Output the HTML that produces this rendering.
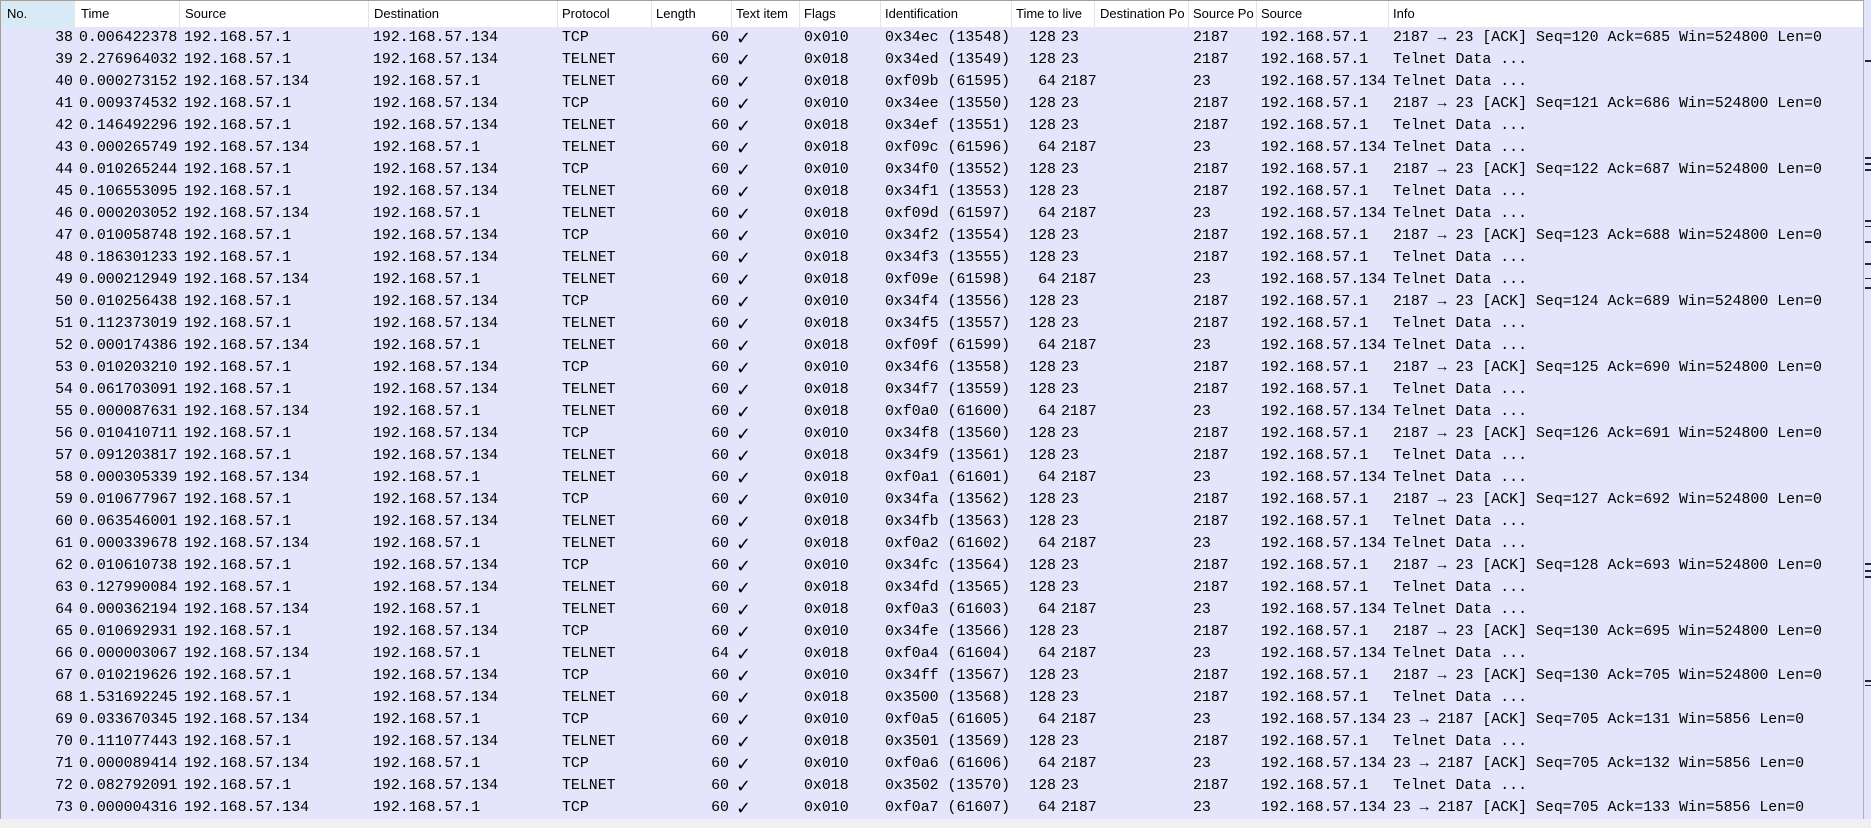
<!DOCTYPE html>
<html><head><meta charset="utf-8"><style>
html,body{margin:0;padding:0;}
body{width:1871px;height:828px;position:relative;overflow:hidden;background:#f0f0f0;font-family:"Liberation Sans",sans-serif;}
#tbl{position:absolute;left:0;top:0;width:1864px;height:819px;background:#e4e4fa;border-top:1px solid #a0a0a0;border-left:1px solid #a0a0a0;border-right:1px solid #b0b0b0;box-sizing:border-box;}
#hdr{position:absolute;left:0;top:0;width:1862px;height:26px;background:#fff;font-size:13px;color:#000;}
#hdr span{position:absolute;top:5px;}
#hdr i{position:absolute;top:0;width:1px;height:26px;background:#e4e4e4;}
#nohl{position:absolute;left:0;top:0;width:73px;height:26px;background:#d9eaf7;}
.r{position:absolute;left:0;width:1862px;height:22px;font-family:"Liberation Mono",monospace;font-size:14.9px;line-height:23px;color:#000;white-space:pre;}
.r span{position:absolute;top:0;}
.a{right:1790px;text-align:right}
.b{left:78px}.c{left:183px}.d{left:372px}.e{left:561px}
.f{right:1134px}.g{left:735px;font-size:18px;font-family:"DejaVu Sans",sans-serif}.h{left:803px}.k{left:884px}
.l{right:807px}.m{left:1060px}.n{left:1192px}.o{left:1260px}.p{left:1392px}
#strip{position:absolute;left:1864px;top:0;width:7px;height:819px;background:#e4e4fa;}
#strip b{position:absolute;left:1px;width:6px;height:2px;background:#1a2a3a;}
</style></head><body>
<div id="tbl">
<div id="hdr"><div id="nohl"></div>
<span style="left:6px">No.</span><i style="left:73px"></i>
<span style="left:80px">Time</span><i style="left:178px"></i>
<span style="left:184px">Source</span><i style="left:367px"></i>
<span style="left:373px">Destination</span><i style="left:556px"></i>
<span style="left:561px">Protocol</span><i style="left:650px"></i>
<span style="left:655px">Length</span><i style="left:730px"></i>
<span style="left:735px">Text item</span><i style="left:798px"></i>
<span style="left:803px">Flags</span><i style="left:879px"></i>
<span style="left:884px">Identification</span><i style="left:1010px"></i>
<span style="left:1015px">Time to live</span><i style="left:1093px"></i>
<span style="left:1099px">Destination Po</span><i style="left:1187px"></i>
<span style="left:1192px">Source Po</span><i style="left:1255px"></i>
<span style="left:1260px">Source</span><i style="left:1387px"></i>
<span style="left:1392px">Info</span>
</div>
<div class="r" style="top:26px"><span class="a">38</span><span class="b">0.006422378</span><span class="c">192.168.57.1</span><span class="d">192.168.57.134</span><span class="e">TCP</span><span class="f">60</span><span class="g">✓</span><span class="h">0x010</span><span class="k">0x34ec (13548)</span><span class="l">128</span><span class="m">23</span><span class="n">2187</span><span class="o">192.168.57.1</span><span class="p">2187 → 23 [ACK] Seq=120 Ack=685 Win=524800 Len=0</span></div>
<div class="r" style="top:48px"><span class="a">39</span><span class="b">2.276964032</span><span class="c">192.168.57.1</span><span class="d">192.168.57.134</span><span class="e">TELNET</span><span class="f">60</span><span class="g">✓</span><span class="h">0x018</span><span class="k">0x34ed (13549)</span><span class="l">128</span><span class="m">23</span><span class="n">2187</span><span class="o">192.168.57.1</span><span class="p">Telnet Data ...</span></div>
<div class="r" style="top:70px"><span class="a">40</span><span class="b">0.000273152</span><span class="c">192.168.57.134</span><span class="d">192.168.57.1</span><span class="e">TELNET</span><span class="f">60</span><span class="g">✓</span><span class="h">0x018</span><span class="k">0xf09b (61595)</span><span class="l">64</span><span class="m">2187</span><span class="n">23</span><span class="o">192.168.57.134</span><span class="p">Telnet Data ...</span></div>
<div class="r" style="top:92px"><span class="a">41</span><span class="b">0.009374532</span><span class="c">192.168.57.1</span><span class="d">192.168.57.134</span><span class="e">TCP</span><span class="f">60</span><span class="g">✓</span><span class="h">0x010</span><span class="k">0x34ee (13550)</span><span class="l">128</span><span class="m">23</span><span class="n">2187</span><span class="o">192.168.57.1</span><span class="p">2187 → 23 [ACK] Seq=121 Ack=686 Win=524800 Len=0</span></div>
<div class="r" style="top:114px"><span class="a">42</span><span class="b">0.146492296</span><span class="c">192.168.57.1</span><span class="d">192.168.57.134</span><span class="e">TELNET</span><span class="f">60</span><span class="g">✓</span><span class="h">0x018</span><span class="k">0x34ef (13551)</span><span class="l">128</span><span class="m">23</span><span class="n">2187</span><span class="o">192.168.57.1</span><span class="p">Telnet Data ...</span></div>
<div class="r" style="top:136px"><span class="a">43</span><span class="b">0.000265749</span><span class="c">192.168.57.134</span><span class="d">192.168.57.1</span><span class="e">TELNET</span><span class="f">60</span><span class="g">✓</span><span class="h">0x018</span><span class="k">0xf09c (61596)</span><span class="l">64</span><span class="m">2187</span><span class="n">23</span><span class="o">192.168.57.134</span><span class="p">Telnet Data ...</span></div>
<div class="r" style="top:158px"><span class="a">44</span><span class="b">0.010265244</span><span class="c">192.168.57.1</span><span class="d">192.168.57.134</span><span class="e">TCP</span><span class="f">60</span><span class="g">✓</span><span class="h">0x010</span><span class="k">0x34f0 (13552)</span><span class="l">128</span><span class="m">23</span><span class="n">2187</span><span class="o">192.168.57.1</span><span class="p">2187 → 23 [ACK] Seq=122 Ack=687 Win=524800 Len=0</span></div>
<div class="r" style="top:180px"><span class="a">45</span><span class="b">0.106553095</span><span class="c">192.168.57.1</span><span class="d">192.168.57.134</span><span class="e">TELNET</span><span class="f">60</span><span class="g">✓</span><span class="h">0x018</span><span class="k">0x34f1 (13553)</span><span class="l">128</span><span class="m">23</span><span class="n">2187</span><span class="o">192.168.57.1</span><span class="p">Telnet Data ...</span></div>
<div class="r" style="top:202px"><span class="a">46</span><span class="b">0.000203052</span><span class="c">192.168.57.134</span><span class="d">192.168.57.1</span><span class="e">TELNET</span><span class="f">60</span><span class="g">✓</span><span class="h">0x018</span><span class="k">0xf09d (61597)</span><span class="l">64</span><span class="m">2187</span><span class="n">23</span><span class="o">192.168.57.134</span><span class="p">Telnet Data ...</span></div>
<div class="r" style="top:224px"><span class="a">47</span><span class="b">0.010058748</span><span class="c">192.168.57.1</span><span class="d">192.168.57.134</span><span class="e">TCP</span><span class="f">60</span><span class="g">✓</span><span class="h">0x010</span><span class="k">0x34f2 (13554)</span><span class="l">128</span><span class="m">23</span><span class="n">2187</span><span class="o">192.168.57.1</span><span class="p">2187 → 23 [ACK] Seq=123 Ack=688 Win=524800 Len=0</span></div>
<div class="r" style="top:246px"><span class="a">48</span><span class="b">0.186301233</span><span class="c">192.168.57.1</span><span class="d">192.168.57.134</span><span class="e">TELNET</span><span class="f">60</span><span class="g">✓</span><span class="h">0x018</span><span class="k">0x34f3 (13555)</span><span class="l">128</span><span class="m">23</span><span class="n">2187</span><span class="o">192.168.57.1</span><span class="p">Telnet Data ...</span></div>
<div class="r" style="top:268px"><span class="a">49</span><span class="b">0.000212949</span><span class="c">192.168.57.134</span><span class="d">192.168.57.1</span><span class="e">TELNET</span><span class="f">60</span><span class="g">✓</span><span class="h">0x018</span><span class="k">0xf09e (61598)</span><span class="l">64</span><span class="m">2187</span><span class="n">23</span><span class="o">192.168.57.134</span><span class="p">Telnet Data ...</span></div>
<div class="r" style="top:290px"><span class="a">50</span><span class="b">0.010256438</span><span class="c">192.168.57.1</span><span class="d">192.168.57.134</span><span class="e">TCP</span><span class="f">60</span><span class="g">✓</span><span class="h">0x010</span><span class="k">0x34f4 (13556)</span><span class="l">128</span><span class="m">23</span><span class="n">2187</span><span class="o">192.168.57.1</span><span class="p">2187 → 23 [ACK] Seq=124 Ack=689 Win=524800 Len=0</span></div>
<div class="r" style="top:312px"><span class="a">51</span><span class="b">0.112373019</span><span class="c">192.168.57.1</span><span class="d">192.168.57.134</span><span class="e">TELNET</span><span class="f">60</span><span class="g">✓</span><span class="h">0x018</span><span class="k">0x34f5 (13557)</span><span class="l">128</span><span class="m">23</span><span class="n">2187</span><span class="o">192.168.57.1</span><span class="p">Telnet Data ...</span></div>
<div class="r" style="top:334px"><span class="a">52</span><span class="b">0.000174386</span><span class="c">192.168.57.134</span><span class="d">192.168.57.1</span><span class="e">TELNET</span><span class="f">60</span><span class="g">✓</span><span class="h">0x018</span><span class="k">0xf09f (61599)</span><span class="l">64</span><span class="m">2187</span><span class="n">23</span><span class="o">192.168.57.134</span><span class="p">Telnet Data ...</span></div>
<div class="r" style="top:356px"><span class="a">53</span><span class="b">0.010203210</span><span class="c">192.168.57.1</span><span class="d">192.168.57.134</span><span class="e">TCP</span><span class="f">60</span><span class="g">✓</span><span class="h">0x010</span><span class="k">0x34f6 (13558)</span><span class="l">128</span><span class="m">23</span><span class="n">2187</span><span class="o">192.168.57.1</span><span class="p">2187 → 23 [ACK] Seq=125 Ack=690 Win=524800 Len=0</span></div>
<div class="r" style="top:378px"><span class="a">54</span><span class="b">0.061703091</span><span class="c">192.168.57.1</span><span class="d">192.168.57.134</span><span class="e">TELNET</span><span class="f">60</span><span class="g">✓</span><span class="h">0x018</span><span class="k">0x34f7 (13559)</span><span class="l">128</span><span class="m">23</span><span class="n">2187</span><span class="o">192.168.57.1</span><span class="p">Telnet Data ...</span></div>
<div class="r" style="top:400px"><span class="a">55</span><span class="b">0.000087631</span><span class="c">192.168.57.134</span><span class="d">192.168.57.1</span><span class="e">TELNET</span><span class="f">60</span><span class="g">✓</span><span class="h">0x018</span><span class="k">0xf0a0 (61600)</span><span class="l">64</span><span class="m">2187</span><span class="n">23</span><span class="o">192.168.57.134</span><span class="p">Telnet Data ...</span></div>
<div class="r" style="top:422px"><span class="a">56</span><span class="b">0.010410711</span><span class="c">192.168.57.1</span><span class="d">192.168.57.134</span><span class="e">TCP</span><span class="f">60</span><span class="g">✓</span><span class="h">0x010</span><span class="k">0x34f8 (13560)</span><span class="l">128</span><span class="m">23</span><span class="n">2187</span><span class="o">192.168.57.1</span><span class="p">2187 → 23 [ACK] Seq=126 Ack=691 Win=524800 Len=0</span></div>
<div class="r" style="top:444px"><span class="a">57</span><span class="b">0.091203817</span><span class="c">192.168.57.1</span><span class="d">192.168.57.134</span><span class="e">TELNET</span><span class="f">60</span><span class="g">✓</span><span class="h">0x018</span><span class="k">0x34f9 (13561)</span><span class="l">128</span><span class="m">23</span><span class="n">2187</span><span class="o">192.168.57.1</span><span class="p">Telnet Data ...</span></div>
<div class="r" style="top:466px"><span class="a">58</span><span class="b">0.000305339</span><span class="c">192.168.57.134</span><span class="d">192.168.57.1</span><span class="e">TELNET</span><span class="f">60</span><span class="g">✓</span><span class="h">0x018</span><span class="k">0xf0a1 (61601)</span><span class="l">64</span><span class="m">2187</span><span class="n">23</span><span class="o">192.168.57.134</span><span class="p">Telnet Data ...</span></div>
<div class="r" style="top:488px"><span class="a">59</span><span class="b">0.010677967</span><span class="c">192.168.57.1</span><span class="d">192.168.57.134</span><span class="e">TCP</span><span class="f">60</span><span class="g">✓</span><span class="h">0x010</span><span class="k">0x34fa (13562)</span><span class="l">128</span><span class="m">23</span><span class="n">2187</span><span class="o">192.168.57.1</span><span class="p">2187 → 23 [ACK] Seq=127 Ack=692 Win=524800 Len=0</span></div>
<div class="r" style="top:510px"><span class="a">60</span><span class="b">0.063546001</span><span class="c">192.168.57.1</span><span class="d">192.168.57.134</span><span class="e">TELNET</span><span class="f">60</span><span class="g">✓</span><span class="h">0x018</span><span class="k">0x34fb (13563)</span><span class="l">128</span><span class="m">23</span><span class="n">2187</span><span class="o">192.168.57.1</span><span class="p">Telnet Data ...</span></div>
<div class="r" style="top:532px"><span class="a">61</span><span class="b">0.000339678</span><span class="c">192.168.57.134</span><span class="d">192.168.57.1</span><span class="e">TELNET</span><span class="f">60</span><span class="g">✓</span><span class="h">0x018</span><span class="k">0xf0a2 (61602)</span><span class="l">64</span><span class="m">2187</span><span class="n">23</span><span class="o">192.168.57.134</span><span class="p">Telnet Data ...</span></div>
<div class="r" style="top:554px"><span class="a">62</span><span class="b">0.010610738</span><span class="c">192.168.57.1</span><span class="d">192.168.57.134</span><span class="e">TCP</span><span class="f">60</span><span class="g">✓</span><span class="h">0x010</span><span class="k">0x34fc (13564)</span><span class="l">128</span><span class="m">23</span><span class="n">2187</span><span class="o">192.168.57.1</span><span class="p">2187 → 23 [ACK] Seq=128 Ack=693 Win=524800 Len=0</span></div>
<div class="r" style="top:576px"><span class="a">63</span><span class="b">0.127990084</span><span class="c">192.168.57.1</span><span class="d">192.168.57.134</span><span class="e">TELNET</span><span class="f">60</span><span class="g">✓</span><span class="h">0x018</span><span class="k">0x34fd (13565)</span><span class="l">128</span><span class="m">23</span><span class="n">2187</span><span class="o">192.168.57.1</span><span class="p">Telnet Data ...</span></div>
<div class="r" style="top:598px"><span class="a">64</span><span class="b">0.000362194</span><span class="c">192.168.57.134</span><span class="d">192.168.57.1</span><span class="e">TELNET</span><span class="f">60</span><span class="g">✓</span><span class="h">0x018</span><span class="k">0xf0a3 (61603)</span><span class="l">64</span><span class="m">2187</span><span class="n">23</span><span class="o">192.168.57.134</span><span class="p">Telnet Data ...</span></div>
<div class="r" style="top:620px"><span class="a">65</span><span class="b">0.010692931</span><span class="c">192.168.57.1</span><span class="d">192.168.57.134</span><span class="e">TCP</span><span class="f">60</span><span class="g">✓</span><span class="h">0x010</span><span class="k">0x34fe (13566)</span><span class="l">128</span><span class="m">23</span><span class="n">2187</span><span class="o">192.168.57.1</span><span class="p">2187 → 23 [ACK] Seq=130 Ack=695 Win=524800 Len=0</span></div>
<div class="r" style="top:642px"><span class="a">66</span><span class="b">0.000003067</span><span class="c">192.168.57.134</span><span class="d">192.168.57.1</span><span class="e">TELNET</span><span class="f">64</span><span class="g">✓</span><span class="h">0x018</span><span class="k">0xf0a4 (61604)</span><span class="l">64</span><span class="m">2187</span><span class="n">23</span><span class="o">192.168.57.134</span><span class="p">Telnet Data ...</span></div>
<div class="r" style="top:664px"><span class="a">67</span><span class="b">0.010219626</span><span class="c">192.168.57.1</span><span class="d">192.168.57.134</span><span class="e">TCP</span><span class="f">60</span><span class="g">✓</span><span class="h">0x010</span><span class="k">0x34ff (13567)</span><span class="l">128</span><span class="m">23</span><span class="n">2187</span><span class="o">192.168.57.1</span><span class="p">2187 → 23 [ACK] Seq=130 Ack=705 Win=524800 Len=0</span></div>
<div class="r" style="top:686px"><span class="a">68</span><span class="b">1.531692245</span><span class="c">192.168.57.1</span><span class="d">192.168.57.134</span><span class="e">TELNET</span><span class="f">60</span><span class="g">✓</span><span class="h">0x018</span><span class="k">0x3500 (13568)</span><span class="l">128</span><span class="m">23</span><span class="n">2187</span><span class="o">192.168.57.1</span><span class="p">Telnet Data ...</span></div>
<div class="r" style="top:708px"><span class="a">69</span><span class="b">0.033670345</span><span class="c">192.168.57.134</span><span class="d">192.168.57.1</span><span class="e">TCP</span><span class="f">60</span><span class="g">✓</span><span class="h">0x010</span><span class="k">0xf0a5 (61605)</span><span class="l">64</span><span class="m">2187</span><span class="n">23</span><span class="o">192.168.57.134</span><span class="p">23 → 2187 [ACK] Seq=705 Ack=131 Win=5856 Len=0</span></div>
<div class="r" style="top:730px"><span class="a">70</span><span class="b">0.111077443</span><span class="c">192.168.57.1</span><span class="d">192.168.57.134</span><span class="e">TELNET</span><span class="f">60</span><span class="g">✓</span><span class="h">0x018</span><span class="k">0x3501 (13569)</span><span class="l">128</span><span class="m">23</span><span class="n">2187</span><span class="o">192.168.57.1</span><span class="p">Telnet Data ...</span></div>
<div class="r" style="top:752px"><span class="a">71</span><span class="b">0.000089414</span><span class="c">192.168.57.134</span><span class="d">192.168.57.1</span><span class="e">TCP</span><span class="f">60</span><span class="g">✓</span><span class="h">0x010</span><span class="k">0xf0a6 (61606)</span><span class="l">64</span><span class="m">2187</span><span class="n">23</span><span class="o">192.168.57.134</span><span class="p">23 → 2187 [ACK] Seq=705 Ack=132 Win=5856 Len=0</span></div>
<div class="r" style="top:774px"><span class="a">72</span><span class="b">0.082792091</span><span class="c">192.168.57.1</span><span class="d">192.168.57.134</span><span class="e">TELNET</span><span class="f">60</span><span class="g">✓</span><span class="h">0x018</span><span class="k">0x3502 (13570)</span><span class="l">128</span><span class="m">23</span><span class="n">2187</span><span class="o">192.168.57.1</span><span class="p">Telnet Data ...</span></div>
<div class="r" style="top:796px"><span class="a">73</span><span class="b">0.000004316</span><span class="c">192.168.57.134</span><span class="d">192.168.57.1</span><span class="e">TCP</span><span class="f">60</span><span class="g">✓</span><span class="h">0x010</span><span class="k">0xf0a7 (61607)</span><span class="l">64</span><span class="m">2187</span><span class="n">23</span><span class="o">192.168.57.134</span><span class="p">23 → 2187 [ACK] Seq=705 Ack=133 Win=5856 Len=0</span></div>
</div>
<div id="strip">
<b style="top:60px"></b><b style="top:157px"></b><b style="top:163px"></b><b style="top:169px"></b>
<b style="top:220px"></b><b style="top:226px;height:1px"></b><b style="top:241px"></b><b style="top:263px"></b>
<b style="top:278px;height:1px"></b><b style="top:287px"></b>
<b style="top:563px"></b><b style="top:570px"></b><b style="top:576px"></b>
<b style="top:680px"></b><b style="top:685px;height:1px"></b>
</div>
</body></html>
